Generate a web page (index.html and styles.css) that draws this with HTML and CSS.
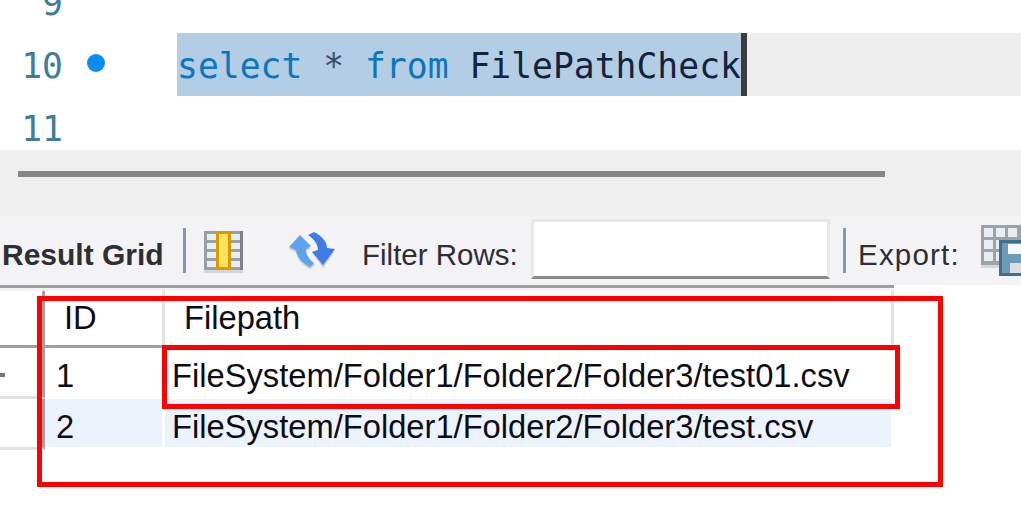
FILE: index.html
```html
<!DOCTYPE html>
<html>
<head>
    <title>FilePathCheck query</title>
    <link rel="stylesheet" href="styles.css">
</head>
<body>
    <div class="page">
        <div class="editor">
            <div class="line line_first">
                <span class="lineNo">9</span>
            </div>
            <div class="line">
                <span class="lineNo">10</span>
                <span class="dot"></span>
                <div class="code"><span class="selected"><span class="kw">select</span> <span class="star">*</span> <span class="kw">from</span> FilePathCheck</span></div>
            </div>
            <div class="line">
                <span class="lineNo">11</span>
            </div>
        </div>

        <div class="splitter"><div class="splitter_bar"></div></div>

        <div class="toolbar">
            <span class="tb_label tb_result">Result Grid</span>
            <span class="tb_sep"></span>
            <svg class="icon_cols" width="39" height="42" viewBox="0 0 39 42">
                <rect x="0" y="39" width="39" height="3" fill="#d6d6d8"/>
                <rect x="0" y="0" width="39" height="39" fill="#9a9fa6"/>
                <rect x="36" y="0" width="3" height="39" fill="#7e8288"/>
                <path d="M3 3h33v6h-33zM3 12h33v6h-33zM3 21h33v6h-33zM3 30h33v6h-33z" fill="#e9eef3"/>
                <rect x="12" y="0" width="15" height="39" fill="#d89a00"/>
                <rect x="15" y="3" width="9" height="33" fill="#ffe35c"/>
            </svg>
            <svg class="icon_refresh" width="48" height="40" viewBox="0 0 48 40">
                <path d="M12 5 L1 17 L8 20 C9 27 14 33 22 37 L27 33 C21 29 18 25 18 19 L23 16 Z" fill="#c8c9cc"/>
                <path d="M12 3 L1 15 L8 18 C9 25 14 31 22 35 L26 31 C21 27 18 23 18 17 L23 14 Z" fill="#5ea3ec"/>
                <path d="M25 21 L35 36 L46 20 Z" fill="#c8c9cc"/>
                <path d="M20 3 L26 0 C34 4 39 10 39 16 L47 17 L35 33 L24 20 L30 18 C30 12 26 7 20 3 Z" fill="#3f7be6"/>
            </svg>
            <span class="tb_label tb_filter">Filter Rows:</span>
            <span class="filter_box"></span>
            <span class="tb_sep tb_sep_export"></span>
            <span class="tb_label tb_export">Export:</span>
            <svg class="icon_export" width="40" height="51" viewBox="0 0 40 51">
                <rect x="0" y="40" width="20" height="3" fill="#d6d6d8"/>
                <rect x="0" y="0" width="40" height="40" fill="#9ea3a9"/>
                <path d="M3 3h9v9h-9zM15 3h9v9h-9zM27 3h9v9h-9zM3 15h9v9h-9zM15 15h9v9h-9zM27 15h9v9h-9zM3 27h9v9h-9zM15 27h9v9h-9z" fill="#e9eef3"/>
                <rect x="18" y="15" width="22" height="36" fill="#3f6f90"/>
                <rect x="21" y="18" width="19" height="30" fill="#6d9ab5"/>
                <rect x="27" y="19" width="13" height="10" fill="#f4f6f8"/>
                <rect x="29" y="38" width="11" height="10" fill="#d9dee2"/>
            </svg>
        </div>

        <div class="grid">
            <div class="row row_head">
                <div class="gutter"></div>
                <div class="cell cell_id">ID</div>
                <div class="cell cell_path">Filepath</div>
            </div>
            <div class="row row_one">
                <div class="gutter"><span class="marker"></span></div>
                <div class="cell cell_id">1</div>
                <div class="cell cell_path">FileSystem/Folder1/Folder2/Folder3/test01.csv</div>
            </div>
            <div class="row row_two">
                <div class="gutter"></div>
                <div class="cell cell_id">2</div>
                <div class="cell cell_path">FileSystem/Folder1/Folder2/Folder3/test.csv</div>
            </div>
        </div>

        <div class="redbox redbox_outer"></div>
        <div class="redbox redbox_inner"></div>
    </div>
</body>
</html>
```

FILE: styles.css
```css
body {
    margin: 0;
    background-color: #fff;
}

.page {
    position: relative;
    width: 1021px;
    height: 508px;
    overflow: hidden;
    font-family: 'Liberation Sans', Arial, sans-serif;
}

/* editor */
.editor {
    height: 150px;
    overflow: hidden;
    font-family: 'DejaVu Sans Mono', monospace;
    font-size: 34.7px;
}

.line {
    display: flex;
    align-items: flex-end;
    height: 63px;
    line-height: 67px;
    white-space: pre;
}

.line_first {
    height: 33px;
}

.lineNo {
    flex: none;
    width: 63px;
    height: 63px;
    text-align: right;
    color: #3f7d98;
}

.dot {
    flex: none;
    width: 18px;
    height: 18px;
    margin: 0 0 24px 24px;
    border-radius: 50%;
    background-color: #0a8cf5;
}

.code {
    flex: 1;
    height: 63px;
    margin-left: 72px;
    background-color: #eee;
    color: #14233c;
}

.selected {
    display: inline-block;
    height: 63px;
    background-color: #b3cee4;
    border-right: 6px solid #3c3c3c;
}

.kw {
    color: #0b75bd;
}

.star {
    color: #3c4c6c;
}

/* splitter */
.splitter {
    height: 66px;
    padding: 21px 136px 0 18px;
    box-sizing: border-box;
    background-color: #efefef;
}

.splitter_bar {
    height: 6px;
    background-color: #868686;
}

/* toolbar */
.toolbar {
    display: flex;
    align-items: center;
    height: 69px;
    background-color: #f3f3f6;
    font-size: 29.5px;
    color: #2e2e33;
    white-space: nowrap;
}

.tb_label {
    flex: none;
    box-sizing: border-box;
    padding-top: 8px;
}

.tb_result {
    width: 183px;
    padding-left: 2px;
    font-size: 30px;
    font-weight: bold;
}

.tb_sep {
    flex: none;
    width: 3px;
    height: 45px;
    background-color: #8a97a8;
}

.icon_cols {
    flex: none;
    margin-left: 18px;
    margin-top: 3px;
}

.icon_refresh {
    flex: none;
    margin-left: 45px;
    margin-top: 3px;
}

.tb_filter {
    width: 169px;
    margin-left: 26px;
}

.filter_box {
    flex: none;
    box-sizing: border-box;
    width: 299px;
    height: 60px;
    margin-bottom: 3px;
    background-color: #fff;
    border: 3px solid #e8e8ea;
    border-bottom-color: #8a8a8a;
}

.tb_sep_export {
    margin-left: 13px;
}

.tb_export {
    width: 123px;
    margin-left: 12px;
    letter-spacing: 1.2px;
}

.icon_export {
    flex: none;
}

/* result grid */
.grid {
    width: 894px;
    border-top: 3px solid #a0a0a0;
    font-size: 32.7px;
    color: #0c0c14;
}

.row {
    display: flex;
    box-sizing: border-box;
}

.gutter {
    flex: none;
    position: relative;
    box-sizing: border-box;
    width: 45px;
    border-right: 3px solid #a0a0a0;
}

.cell {
    flex: none;
    box-sizing: border-box;
    white-space: nowrap;
}

.cell_id {
    width: 120px;
    padding-left: 11px;
    border-right: 3px solid #e2e2e2;
}

.cell_path {
    width: 726px;
    padding-left: 7px;
}

.row_head {
    height: 60px;
    line-height: 54px;
    border-top: 3px solid #f4f4f4;
    border-bottom: 3px solid #a0a0a0;
}

.row_head .cell_id {
    padding-left: 19px;
}

.row_head .cell_path {
    width: 729px;
    padding-left: 19px;
    border-right: 3px solid #e2e2e2;
}

.row_one {
    height: 51px;
    line-height: 56px;
}

.row_one .gutter {
    border-bottom: 3px solid #e2e2e2;
    border-right-color: #a0a0a0;
}

.row_two {
    height: 51px;
    line-height: 56px;
}

.row_two .gutter {
    border-bottom: 3px solid #e2e2e2;
}

.row_two .cell {
    height: 48px;
    background-color: #ecf3fd;
}

.row_two .cell_id {
    border-right-color: #fff;
}

.marker {
    position: absolute;
    left: 0;
    top: 25px;
    width: 5px;
    height: 4px;
    background-color: #777;
}

/* annotation boxes drawn over the screenshot */
.redbox {
    position: absolute;
    box-sizing: border-box;
    border: 5px solid #f00;
}

.redbox_outer {
    left: 37px;
    top: 296px;
    width: 906px;
    height: 191px;
}

.redbox_inner {
    left: 162px;
    top: 345px;
    width: 738px;
    height: 64px;
}
```
